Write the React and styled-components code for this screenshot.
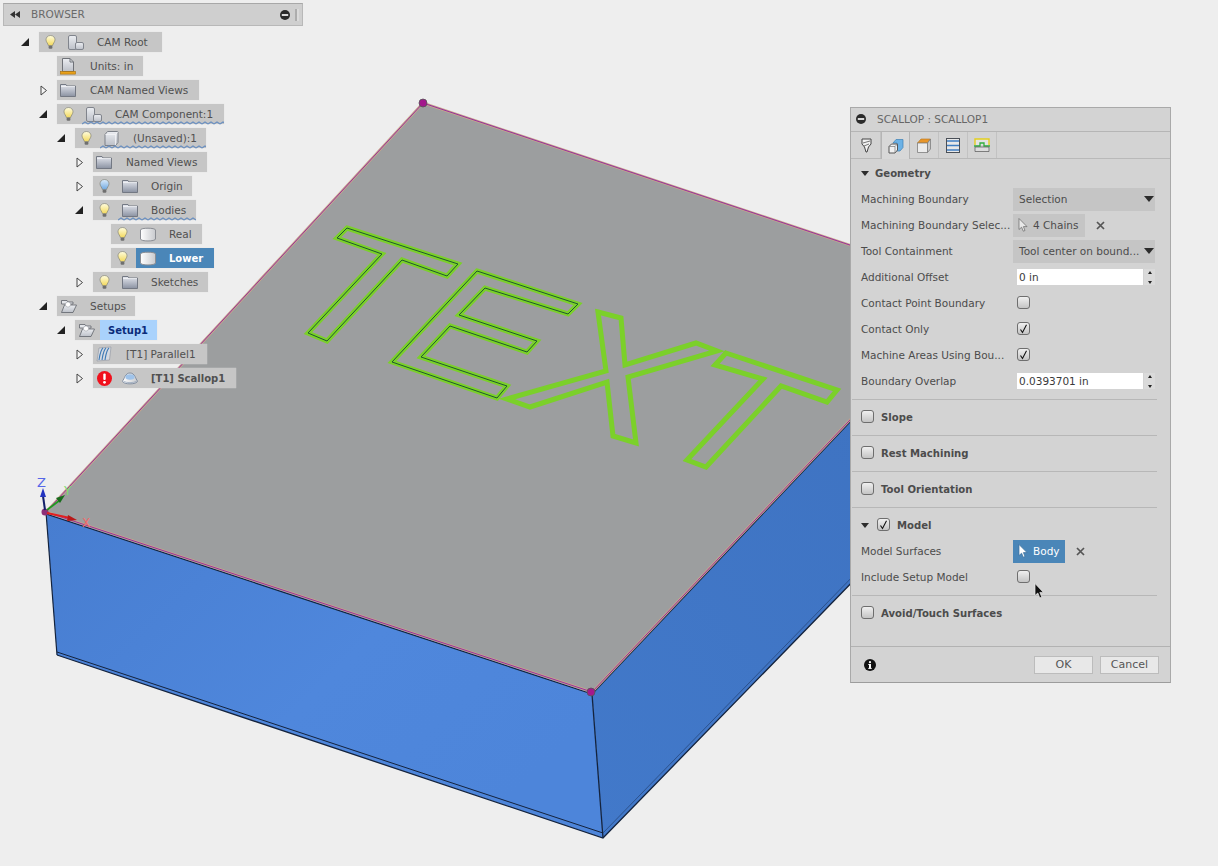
import { createGlobalStyle, styled } from "styled-components";

const GlobalStyle = createGlobalStyle`
  html, body {
    margin: 0;
    padding: 0;
    background: #eeeeee;
    font-family: "DejaVu Sans", "Liberation Sans", sans-serif;
    font-size: 11px;
    color: #4a4a4a;
  }
`;

const Page = styled.div`
  position: relative;
  width: 1218px;
  height: 866px;
  overflow: hidden;
  background: #eeeeee;
`;

const SceneSvg = styled.svg`
  position: absolute;
  inset: 0;
`;

/* browser panel */
const BrowserWindow = styled.div`
  position: absolute;
  left: 3px;
  top: 3px;
  width: 300px;
`;

const BrowserHeader = styled.div`
  display: flex;
  align-items: center;
  height: 23px;
  box-sizing: border-box;
  padding: 0 3px 0 6px;
  background: #cfcfcf;
  border: 1px solid #b8b8b8;
  border-top-color: #a8a8a8;
  color: #6a6a6a;
  font-size: 10.5px;
`;

const BrowserTitle = styled.span`
  margin: 0 0 2px 10px;
  flex: 1;
`;

const Tree = styled.div`
  display: flex;
  flex-direction: column;
  padding-top: 4px;
`;

const TreeRow = styled.div`
  display: flex;
  align-items: center;
  height: 24px;
  padding-left: ${(p) => 18 + p.$depth * 18}px;
`;

const ArrowSlot = styled.div`
  display: flex;
  align-items: center;
  width: 18px;
  flex: none;
`;

const Chip = styled.div`
  position: relative;
  display: flex;
  align-items: center;
  width: ${(p) => p.$width}px;
  height: 20px;
  background: #c6c6c6;
  box-shadow: 0 0 1px #dddddd;
  flex: none;
`;

const LeadSlot = styled.div`
  display: flex;
  align-items: center;
  justify-content: center;
  width: 23px;
  margin-right: 2px;
  flex: none;
`;

const IconSlot = styled.div`
  display: flex;
  align-items: center;
  width: 25px;
  padding-left: ${(p) => (p.$afterLead ? 4 : 3)}px;
  box-sizing: border-box;
  flex: none;
`;

const ChipLabel = styled.span`
  padding-left: 8px;
  white-space: nowrap;
  font-size: ${(p) => (p.$bold ? 10 : 10.5)}px;
  font-weight: ${(p) => (p.$bold ? 700 : 400)};
  color: ${(p) => p.$color || "#505050"};
`;

const Highlight = styled.div`
  display: flex;
  align-items: center;
  align-self: stretch;
  flex: 1;
  background: ${(p) => p.$bg};
`;

const WaveLine = styled.svg`
  position: absolute;
  left: 25px;
  right: 0;
  bottom: -1px;
  width: calc(100% - 25px);
  height: 4px;
`;

/* scallop dialog */
const Dialog = styled.div`
  position: absolute;
  left: 850px;
  top: 107px;
  width: 321px;
  height: 576px;
  box-sizing: border-box;
  display: flex;
  flex-direction: column;
  background: #d3d3d3;
  border: 1px solid #a9a9a9;
  border-bottom-color: #9c9c9c;
`;

const DialogTitle = styled.div`
  display: flex;
  align-items: center;
  gap: 11px;
  height: 24px;
  box-sizing: border-box;
  padding: 0 0 2px 5px;
  border-bottom: 1px solid #b5b5b5;
  color: #666666;
  font-size: 10.5px;
`;

const TabBar = styled.div`
  display: flex;
  height: 27px;
  box-sizing: border-box;
  padding-left: 1px;
  border-bottom: 1px solid #b9b9b9;
`;

const Tab = styled.div`
  display: flex;
  align-items: center;
  justify-content: center;
  width: 29px;
  height: ${(p) => (p.$active ? 27 : 26)}px;
  box-sizing: border-box;
  background: ${(p) => (p.$active ? "#d8d8d8" : "transparent")};
  border-right: 1px solid ${(p) => (p.$active ? "#b5b5b5" : "#c2c2c2")};
  border-left: ${(p) => (p.$active ? "1px solid #b5b5b5" : "0")};
`;

const Section = styled.div`
  margin: 0 13px 0 1px;
  padding: ${(p) => (p.$first ? 1 : 4)}px 0 5px;
  border-bottom: ${(p) => (p.$last ? "0" : "1px solid #b7b7b7")};
`;

const SectionHeader = styled.div`
  display: flex;
  align-items: center;
  height: 26px;
  padding-left: 9px;
  font-weight: 700;
  font-size: 10.1px;
  color: #4c4c4c;
`;

const HeaderText = styled.span`
  margin-left: ${(p) => p.$gap}px;
`;

const DownTriangle = styled.span`
  display: inline-block;
  width: 0;
  height: 0;
  border-left: ${(p) => p.$size}px solid transparent;
  border-right: ${(p) => p.$size}px solid transparent;
  border-top: ${(p) => p.$size + 1}px solid #2c2c2c;
  flex: none;
`;

const FormRow = styled.div`
  display: flex;
  align-items: center;
  height: 26px;
  padding-left: 9px;
`;

const FormLabel = styled.div`
  width: 153px;
  flex: none;
  white-space: nowrap;
  font-size: 10.5px;
  color: #4c4c4c;
`;

const Select = styled.div`
  display: flex;
  align-items: center;
  justify-content: space-between;
  width: 142px;
  height: 23px;
  box-sizing: border-box;
  padding: 0 1px 0 6px;
  margin-left: -1px;
  background: #c5c5c5;
  font-size: 10.5px;
  color: #4c4c4c;
  white-space: nowrap;
`;

const PickButton = styled.div`
  display: flex;
  align-items: center;
  gap: 5px;
  width: ${(p) => p.$width}px;
  height: 23px;
  box-sizing: border-box;
  padding-left: 5px;
  margin-left: -1px;
  background: ${(p) => (p.$active ? "#4a86b8" : "#c5c5c5")};
  color: ${(p) => (p.$active ? "#ffffff" : "#4c4c4c")};
  font-size: 10.5px;
`;

const ClearButton = styled.span`
  display: flex;
  margin-left: 11px;
`;

const NumberField = styled.div`
  display: flex;
  align-items: center;
  margin-left: 3px;
`;

const NumberInput = styled.div`
  width: 126px;
  height: 16px;
  box-sizing: border-box;
  padding-left: 2px;
  line-height: 16px;
  background: #ffffff;
  font-size: 10.5px;
  color: #3a3a3a;
`;

const Spinner = styled.div`
  display: flex;
  flex-direction: column;
  justify-content: space-between;
  align-items: center;
  width: 11px;
  height: 16px;
  margin-left: 1px;
  padding: 2px 0 1px;
  box-sizing: border-box;
  background: #dadada;
`;

const SpinUp = styled.span`
  width: 0;
  height: 0;
  border-left: 2px solid transparent;
  border-right: 2px solid transparent;
  border-bottom: 3px solid #222222;
`;

const SpinDown = styled.span`
  width: 0;
  height: 0;
  border-left: 2px solid transparent;
  border-right: 2px solid transparent;
  border-top: 3px solid #222222;
`;

const CheckBox = styled.span`
  display: flex;
  align-items: center;
  justify-content: center;
  width: 13px;
  height: 13px;
  margin: 0 0 1px ${(p) => p.$indent || 0}px;
  box-sizing: border-box;
  border: 1px solid #6e6e6e;
  border-radius: 3px;
  background: linear-gradient(#f0f0f0, #c4c4c4);
  flex: none;
`;

const Spacer = styled.div`
  flex: 1;
`;

const DialogFooter = styled.div`
  display: flex;
  align-items: center;
  justify-content: space-between;
  height: 36px;
  box-sizing: border-box;
  padding: 0 11px 0 13px;
  border-top: 1px solid #b2b2b2;
`;

const FooterButtons = styled.div`
  display: flex;
  gap: 7px;
`;

const FooterButton = styled.div`
  width: 59px;
  height: 18px;
  box-sizing: border-box;
  line-height: 16px;
  text-align: center;
  background: #e8e8e8;
  border: 1px solid #bcbcbc;
  font-size: 11px;
  color: #555555;
`;

const Pointer = styled.svg`
  position: absolute;
  left: 1034px;
  top: 583px;
`;

/* small drawings */
const ExpandedArrow = () => (
  <svg width="8" height="8" viewBox="0 0 8 8">
    <path d="M0 8 L8 0 V8 Z" fill="#222" />
  </svg>
);

const CollapsedArrow = () => (
  <svg width="8" height="11" viewBox="0 0 8 11" style={{ marginLeft: 1 }}>
    <path d="M1 1 L6.5 5.5 L1 10 Z" fill="#f4f4f4" stroke="#444" strokeWidth="1" />
  </svg>
);

const Bulb = ({ blue }) => (
  <svg width="11" height="15" viewBox="0 0 11 15">
    <path
      d="M5.5 .5 C2.6 .5 1 2.6 1 4.8 C1 7 3 8.4 3.4 10.6 H7.6 C8 8.4 10 7 10 4.8 C10 2.6 8.4 .5 5.5 .5 Z"
      fill={blue ? "url(#bulbBlue)" : "url(#bulbYellow)"}
      stroke="#77776a"
      strokeWidth=".6"
    />
    <rect x="3.6" y="10.8" width="3.8" height="3" rx="1" fill="#6f6f6f" />
  </svg>
);

const ComponentIcon = () => (
  <svg width="16" height="15" viewBox="0 0 16 15">
    <rect x=".5" y=".5" width="8" height="14" rx="1.5" fill="url(#metal)" stroke="#80848c" />
    <rect x="7.5" y="7.5" width="8" height="7" rx="1.5" fill="url(#metal)" stroke="#80848c" />
  </svg>
);

const DocIcon = () => (
  <svg width="16" height="17" viewBox="0 0 16 17">
    <path d="M2.5 .5 H10 L13.5 4 V13.5 H2.5 Z" fill="url(#metal)" stroke="#6f7278" />
    <path d="M10 .5 V4 H13.5" fill="none" stroke="#6f7278" />
    <rect x=".5" y="13.5" width="15" height="2.6" fill="#e9a11a" stroke="#a76d08" strokeWidth=".6" />
  </svg>
);

const FolderIcon = () => (
  <svg width="16" height="14" viewBox="0 0 16 14">
    <path d="M.5 1.5 H6 L7 3 H15.5 V13.5 H.5 Z" fill="url(#folder)" stroke="#737883" />
    <path d="M1 3.5 H15" stroke="#f4f5f8" strokeWidth=".8" />
  </svg>
);

const OpenFolderIcon = () => (
  <svg width="17" height="13" viewBox="0 0 17 13">
    <path d="M1.5 .5 H7 L8 2 H13 V4 H1.5 Z" fill="#e4e6ea" stroke="#5f636b" strokeWidth=".8" />
    <path d="M1.5 12.5 L4.5 5 H16.5 L13 12.5 Z" fill="url(#metal)" stroke="#5f636b" strokeWidth=".8" />
    <circle cx="8" cy="4.5" r="2.6" fill="#fff" stroke="#8a8e96" strokeWidth=".5" />
  </svg>
);

const BoxIcon = () => (
  <svg width="15" height="15" viewBox="0 0 15 15">
    <path d="M1 3.5 L3.5 .5 H14 V11.5 L11.5 14.5 H1 Z" fill="url(#metal)" stroke="#7c8088" />
    <path d="M1.5 3.5 H11.5 V14 M11.5 3.5 L14 .5" fill="none" stroke="#f4f4f6" strokeWidth=".8" />
  </svg>
);

const CylinderIcon = () => (
  <svg width="16" height="15" viewBox="0 0 16 15">
    <path
      d="M.5 3 C.5 .6 15.5 .6 15.5 3 V12 C15.5 14.6 .5 14.6 .5 12 Z"
      fill="url(#cylinder)"
      stroke="#8a8d93"
    />
  </svg>
);

const ParallelIcon = () => (
  <svg width="16" height="16" viewBox="0 0 16 16">
    <path d="M1 15 L3 2 L15 1 L13.5 14 Z" fill="#d5dae2" stroke="#8e949e" strokeWidth=".6" />
    <path
      d="M3 14 C4 8 4.5 4 7 2 M6 14 C7 8 7.5 4 10 2 M9 14 C10 8 10.5 4 13 2"
      fill="none"
      stroke="#3f7bb6"
      strokeWidth="1.1"
    />
  </svg>
);

const ScallopIcon = () => (
  <svg width="16" height="13" viewBox="0 0 16 13">
    <path
      d="M.5 9 C2.5 7 3 1 8 1 C13 1 13.5 7 15.5 9 C15.5 12.8 .5 12.8 .5 9 Z"
      fill="url(#cylinder)"
      stroke="#6f7d94"
      strokeWidth=".8"
    />
    <ellipse cx="8" cy="5" rx="4.6" ry="2.8" fill="#9fc3ea" />
    <path d="M2 9.5 C5 11 11 11 14 9.5" fill="none" stroke="#8fa0b8" strokeWidth=".7" />
  </svg>
);

const ErrorBadge = () => (
  <svg width="15" height="15" viewBox="0 0 15 15">
    <circle cx="7.5" cy="7.5" r="7.5" fill="#f0101c" />
    <rect x="6.3" y="2.5" width="2.4" height="6.6" rx="1" fill="#fff" />
    <circle cx="7.5" cy="11.3" r="1.4" fill="#fff" />
  </svg>
);

const MinusCircle = ({ size }) => (
  <svg width={size} height={size} viewBox="0 0 10 10">
    <circle cx="5" cy="5" r="5" fill="#2a2a2a" />
    <rect x="1.8" y="4" width="6.4" height="2" fill="#d8d8d8" />
  </svg>
);

const RewindIcon = () => (
  <svg width="11" height="7" viewBox="0 0 11 7">
    <path d="M0 3.5 L5 0 V7 Z M5 3.5 L10 0 V7 Z" fill="#333" />
  </svg>
);

const GripIcon = () => (
  <svg width="4" height="12" viewBox="0 0 4 12" style={{ marginLeft: 5 }}>
    <path d="M1 0 V12" stroke="#8a8a8a" />
    <path d="M3 0 V12" stroke="#e6e6e6" />
  </svg>
);

const ToolTabIcon = () => (
  <svg width="11" height="15" viewBox="0 0 11 15">
    <path d="M1 1 H10 V6 L7.5 9 L6 14 H5 L3.5 9 L1 6 Z" fill="#f2f2f2" stroke="#454545" />
    <path d="M2 5 L9 3 M3 8 L8 6" stroke="#555" strokeWidth=".8" />
  </svg>
);

const GeometryTabIcon = () => (
  <svg width="16" height="16" viewBox="0 0 16 16">
    <path d="M5 5 L8 1.5 H15 V9.5 L12 13 H9 V5 Z" fill="#6cb2e6" stroke="#3d7fb5" strokeWidth=".7" />
    <path d="M1 8.5 L3.5 6 H9.5 V12 L7 15 H1 Z" fill="#f0f0f0" stroke="#555" />
    <path d="M1 8.5 H7 V15 M7 8.5 L9.5 6" fill="none" stroke="#777" strokeWidth=".7" />
  </svg>
);

const StockTabIcon = () => (
  <svg width="14" height="15" viewBox="0 0 14 15">
    <path d="M.5 5 L4 1 H13.5 L10.5 5 Z" fill="#e8962a" stroke="#b87416" strokeWidth=".6" />
    <path d="M.5 5 H10.5 V14.5 H.5 Z" fill="#ececec" stroke="#7d7d7d" strokeWidth=".8" />
    <path d="M10.5 5 L13.5 1 V11 L10.5 14.5 Z" fill="#c9c9c9" stroke="#7d7d7d" strokeWidth=".8" />
  </svg>
);

const HeightsTabIcon = () => (
  <svg width="14" height="15" viewBox="0 0 14 15">
    <rect x=".5" y=".5" width="13" height="14" fill="#e8e8e8" stroke="#4a4f57" />
    <path d="M1 3 H13 M1 7.5 H13 M1 12 H13" stroke="#3f7ec2" strokeWidth="1.4" />
  </svg>
);

const PassesTabIcon = () => (
  <svg width="16" height="14" viewBox="0 0 16 14">
    <path d="M1 7 V1 H15 V7" fill="#e4e4e4" stroke="#e4cf1e" strokeWidth="1.4" />
    <path d="M0 8 H6 V5 H10 V8 H16" fill="none" stroke="#2fae3c" strokeWidth="1.3" />
    <path d="M1 9 H15 V13.5 H1 Z" fill="#dcdcdc" stroke="#555" strokeWidth=".7" />
  </svg>
);

const CheckMark = () => (
  <svg width="9" height="10" viewBox="0 0 9 10">
    <path d="M1.5 5.5 L3.5 8.5 L7.5 .8" fill="none" stroke="#111" strokeWidth="1.1" />
  </svg>
);

const CloseMark = () => (
  <svg width="9" height="9" viewBox="0 0 9 9">
    <path d="M1 1 L8 8 M8 1 L1 8" stroke="#555" strokeWidth="1.7" />
  </svg>
);

const ArrowCursor = ({ fill, stroke }) => (
  <svg width="10" height="14" viewBox="0 0 10 14" style={{ flex: "none" }}>
    <path d="M1 .5 V11.5 L3.6 9.2 L5.3 13.2 L7 12.5 L5.4 8.6 H9 Z" fill={fill} stroke={stroke} strokeWidth=".7" />
  </svg>
);

const InfoIcon = () => (
  <svg width="12" height="12" viewBox="0 0 12 12">
    <circle cx="6" cy="6" r="6" fill="#111" />
    <rect x="5" y="5" width="2" height="4.6" fill="#fff" />
    <rect x="4.2" y="5" width="1.6" height=".9" fill="#fff" />
    <rect x="4.2" y="8.9" width="3.6" height=".9" fill="#fff" />
    <circle cx="6" cy="3.2" r="1.1" fill="#fff" />
  </svg>
);

const Wave = ({ id }) => (
  <WaveLine>
    <defs>
      <pattern id={id} width="6" height="4" patternUnits="userSpaceOnUse">
        <path d="M0 3 L3 1 L6 3" fill="none" stroke="#6a8fc0" strokeWidth="1.2" />
      </pattern>
    </defs>
    <rect width="100%" height="4" fill={`url(#${id})`} />
  </WaveLine>
);

const treeItems = [
  { depth: 0, open: true, width: 123, bulb: "on", icon: ComponentIcon, label: "CAM Root" },
  { depth: 1, width: 86, icon: DocIcon, label: "Units: in" },
  { depth: 1, closed: true, width: 142, icon: FolderIcon, label: "CAM Named Views" },
  { depth: 1, open: true, width: 167, bulb: "on", icon: ComponentIcon, label: "CAM Component:1", wave: true },
  { depth: 2, open: true, width: 131, bulb: "on", icon: BoxIcon, label: "(Unsaved):1", wave: true },
  { depth: 3, closed: true, width: 114, icon: FolderIcon, label: "Named Views" },
  { depth: 3, closed: true, width: 99, bulb: "blue", icon: FolderIcon, label: "Origin" },
  { depth: 3, open: true, width: 103, bulb: "on", icon: FolderIcon, label: "Bodies", wave: true },
  { depth: 4, width: 91, bulb: "on", icon: CylinderIcon, label: "Real" },
  { depth: 4, width: 103, bulb: "on", icon: CylinderIcon, label: "Lower", selected: true },
  { depth: 3, closed: true, width: 115, bulb: "on", icon: FolderIcon, label: "Sketches" },
  { depth: 1, open: true, width: 78, icon: OpenFolderIcon, label: "Setups" },
  { depth: 2, open: true, width: 82, icon: OpenFolderIcon, label: "Setup1", active: true },
  { depth: 3, closed: true, width: 114, icon: ParallelIcon, label: "[T1] Parallel1" },
  { depth: 3, closed: true, width: 143, bulb: "error", icon: ScallopIcon, label: "[T1] Scallop1", bold: true },
];

function TreeItem({ item, index }) {
  const Icon = item.icon;
  const lead = item.bulb && (
    <LeadSlot>{item.bulb === "error" ? <ErrorBadge /> : <Bulb blue={item.bulb === "blue"} />}</LeadSlot>
  );
  const icon = (
    <IconSlot $afterLead={!!item.bulb}>
      <Icon />
    </IconSlot>
  );

  return (
    <TreeRow $depth={item.depth}>
      <ArrowSlot>
        {item.open && <ExpandedArrow />}
        {item.closed && <CollapsedArrow />}
      </ArrowSlot>
      <Chip $width={item.width}>
        {lead}
        {item.selected && (
          <Highlight $bg="#4a86b8">
            {icon}
            <ChipLabel $bold $color="#ffffff">{item.label}</ChipLabel>
          </Highlight>
        )}
        {item.active && (
          <>
            {icon}
            <Highlight $bg="#a9d2fc">
              <ChipLabel $bold $color="#0b2c7a">{item.label}</ChipLabel>
            </Highlight>
          </>
        )}
        {!item.selected && !item.active && (
          <>
            {icon}
            <ChipLabel $bold={item.bold}>{item.label}</ChipLabel>
          </>
        )}
        {item.wave && <Wave id={`wave${index}`} />}
      </Chip>
    </TreeRow>
  );
}

const points = (list) => list.map((p) => p.join(",")).join(" ");

const letterT = [[347,228],[458,264],[447,276],[402,260],[327,341],[308,333],[382,254],[337,238]];
const letterE = [[477,271],[578,304],[568,314],[485,288],[459,315],[537,341],[527,352],[450,326],[421,357],[507,386],[497,398],[392,362]];
const letterX = [[598,312],[621,318],[625,365],[696,343],[717,351],[628,377],[636,443],[613,436],[607,382],[530,407],[507,399],[606,371]];
const letterT2 = [[726,353],[837,390],[827,402],[781,386],[706,467],[687,460],[763,379],[715,365]];

function Scene() {
  return (
    <SceneSvg width="1218" height="866" viewBox="0 0 1218 866">
      <defs>
        <linearGradient id="bulbYellow" x1="0" y1="0" x2="0" y2="1">
          <stop offset="0" stopColor="#fffde0" />
          <stop offset="1" stopColor="#f3d95c" />
        </linearGradient>
        <linearGradient id="bulbBlue" x1="0" y1="0" x2="0" y2="1">
          <stop offset="0" stopColor="#dcecfb" />
          <stop offset="1" stopColor="#6fa8e0" />
        </linearGradient>
        <linearGradient id="metal" x1="0" y1="0" x2="0" y2="1">
          <stop offset="0" stopColor="#eceef2" />
          <stop offset="1" stopColor="#bcc0c8" />
        </linearGradient>
        <linearGradient id="folder" x1="0" y1="0" x2="0" y2="1">
          <stop offset="0" stopColor="#e4e7ee" />
          <stop offset="1" stopColor="#8b92a2" />
        </linearGradient>
        <linearGradient id="cylinder" x1="0" y1="0" x2="1" y2="0">
          <stop offset="0" stopColor="#ffffff" />
          <stop offset="1" stopColor="#c8cace" />
        </linearGradient>
        <linearGradient id="leftFace" x1="0" y1="0" x2="1" y2="0.6">
          <stop offset="0" stopColor="#477dd0" />
          <stop offset="0.6" stopColor="#4f87dc" />
          <stop offset="1" stopColor="#4d85da" />
        </linearGradient>
        <linearGradient id="rightFace" x1="0" y1="1" x2="1" y2="0">
          <stop offset="0" stopColor="#4279ca" />
          <stop offset="1" stopColor="#3d71bf" />
        </linearGradient>
      </defs>

      <polygon points="46,512 592,692 603,838 57,655" fill="url(#leftFace)" />
      <polygon points="592,692 976,287 1010,420 603,838" fill="url(#rightFace)" />
      <polygon points="423,103 976,287 592,692 46,512" fill="#9c9e9f" />

      <polyline points="46,514 592,694" fill="none" stroke="#14233d" strokeWidth="1.2" />
      <polyline points="592,694 976,289" fill="none" stroke="#14233d" strokeWidth="1.2" />
      <polyline points="46,512 57,655" fill="none" stroke="#14233d" strokeWidth="1.2" />
      <polyline points="592,694 603,838" fill="none" stroke="#14233d" strokeWidth="1.3" />
      <polyline points="57,655 603,838 1010,420" fill="none" stroke="#14233d" strokeWidth="1.3" />
      <polyline points="57,652 603,833" fill="none" stroke="#14233d" strokeWidth="1" />
      <polyline points="603,833 1005,420" fill="none" stroke="#27497f" strokeWidth=".8" />

      <polygon points="423,103 976,287 592,692 46,512" fill="none" stroke="#c8a58a" strokeWidth="2.4" />
      <polygon points="423,103 976,287 592,692 46,512" fill="none" stroke="#96309f" strokeWidth="1" />

      <polygon points={points(letterT)} fill="none" stroke="#7bd02a" strokeWidth="5" />
      <polygon points={points(letterE)} fill="none" stroke="#7bd02a" strokeWidth="5" />
      <polygon points={points(letterT)} fill="none" stroke="#1d5a2c" strokeWidth="1" />
      <polygon points={points(letterE)} fill="none" stroke="#1d5a2c" strokeWidth="1" />
      <polygon points={points(letterX)} fill="none" stroke="#7bd02a" strokeWidth="5" />
      <polygon points={points(letterT2)} fill="none" stroke="#7bd02a" strokeWidth="5" />

      <circle cx="423" cy="103" r="4" fill="#a3188c" stroke="#555" strokeWidth=".8" />
      <circle cx="591" cy="692" r="4" fill="#a3188c" stroke="#555" strokeWidth=".8" />

      <circle cx="45" cy="512" r="3.5" fill="#8d2f78" />
      <path d="M45 510 L43 496" stroke="#14206a" strokeWidth="2" />
      <path d="M43 488 L40 497 H46 Z" fill="#2233c0" />
      <path d="M47 510 L60 500" stroke="#1f9a20" strokeWidth="1.8" />
      <path d="M65 495 L56 498 L60 503 Z" fill="#176e1c" />
      <path d="M47 513 L70 518" stroke="#e02020" strokeWidth="1.8" />
      <path d="M77 520 L68 515 L67 521 Z" fill="#b81818" />
      <text x="37" y="487" fontSize="13" fontFamily="DejaVu Sans" fill="#5566e8">Z</text>
      <text x="64" y="495" fontSize="12" fontFamily="DejaVu Sans" fill="#7ddc70">Y</text>
      <text x="82" y="527" fontSize="12" fontFamily="DejaVu Sans" fill="#f06a6a">X</text>
    </SceneSvg>
  );
}

function Browser() {
  return (
    <BrowserWindow>
      <BrowserHeader>
        <RewindIcon />
        <BrowserTitle>BROWSER</BrowserTitle>
        <MinusCircle size={10} />
        <GripIcon />
      </BrowserHeader>
      <Tree>
        {treeItems.map((item, index) => (
          <TreeItem key={item.label} item={item} index={index} />
        ))}
      </Tree>
    </BrowserWindow>
  );
}

const Check = ({ checked, indent }) => (
  <CheckBox $indent={indent}>{checked && <CheckMark />}</CheckBox>
);

const Spin = () => (
  <Spinner>
    <SpinUp />
    <SpinDown />
  </Spinner>
);

function ScallopDialog() {
  return (
    <Dialog>
      <DialogTitle>
        <MinusCircle size={10} />
        SCALLOP : SCALLOP1
      </DialogTitle>
      <TabBar>
        <Tab><ToolTabIcon /></Tab>
        <Tab $active><GeometryTabIcon /></Tab>
        <Tab><StockTabIcon /></Tab>
        <Tab><HeightsTabIcon /></Tab>
        <Tab><PassesTabIcon /></Tab>
      </TabBar>

      <Section $first>
        <SectionHeader>
          <DownTriangle $size={4} />
          <HeaderText $gap={6}>Geometry</HeaderText>
        </SectionHeader>
        <FormRow>
          <FormLabel>Machining Boundary</FormLabel>
          <Select>Selection<DownTriangle $size={5} /></Select>
        </FormRow>
        <FormRow>
          <FormLabel>Machining Boundary Selec...</FormLabel>
          <PickButton $width={72}>
            <ArrowCursor fill="#e8e8e8" stroke="#666" />
            4 Chains
          </PickButton>
          <ClearButton><CloseMark /></ClearButton>
        </FormRow>
        <FormRow>
          <FormLabel>Tool Containment</FormLabel>
          <Select>Tool center on bound...<DownTriangle $size={5} /></Select>
        </FormRow>
        <FormRow>
          <FormLabel>Additional Offset</FormLabel>
          <NumberField><NumberInput>0 in</NumberInput><Spin /></NumberField>
        </FormRow>
        <FormRow>
          <FormLabel>Contact Point Boundary</FormLabel>
          <Check indent={3} />
        </FormRow>
        <FormRow>
          <FormLabel>Contact Only</FormLabel>
          <Check indent={3} checked />
        </FormRow>
        <FormRow>
          <FormLabel>Machine Areas Using Bou...</FormLabel>
          <Check indent={3} checked />
        </FormRow>
        <FormRow>
          <FormLabel>Boundary Overlap</FormLabel>
          <NumberField><NumberInput>0.0393701 in</NumberInput><Spin /></NumberField>
        </FormRow>
      </Section>

      <Section>
        <SectionHeader><Check /><HeaderText $gap={7}>Slope</HeaderText></SectionHeader>
      </Section>
      <Section>
        <SectionHeader><Check /><HeaderText $gap={7}>Rest Machining</HeaderText></SectionHeader>
      </Section>
      <Section>
        <SectionHeader><Check /><HeaderText $gap={7}>Tool Orientation</HeaderText></SectionHeader>
      </Section>

      <Section>
        <SectionHeader>
          <DownTriangle $size={4} />
          <Check indent={8} checked />
          <HeaderText $gap={7}>Model</HeaderText>
        </SectionHeader>
        <FormRow>
          <FormLabel>Model Surfaces</FormLabel>
          <PickButton $width={52} $active>
            <ArrowCursor fill="#ffffff" stroke="#3b6f9b" />
            Body
          </PickButton>
          <ClearButton><CloseMark /></ClearButton>
        </FormRow>
        <FormRow>
          <FormLabel>Include Setup Model</FormLabel>
          <Check indent={3} />
        </FormRow>
      </Section>

      <Section $last>
        <SectionHeader><Check /><HeaderText $gap={7}>Avoid/Touch Surfaces</HeaderText></SectionHeader>
      </Section>

      <Spacer />
      <DialogFooter>
        <InfoIcon />
        <FooterButtons>
          <FooterButton>OK</FooterButton>
          <FooterButton>Cancel</FooterButton>
        </FooterButtons>
      </DialogFooter>
    </Dialog>
  );
}

export default function App() {
  return (
    <Page>
      <GlobalStyle />
      <Scene />
      <Browser />
      <ScallopDialog />
      <Pointer width="10" height="16" viewBox="0 0 10 16">
        <path d="M1 .5 V12.5 L3.8 10 L5.8 15 L7.8 14 L5.8 9.4 H9.4 Z" fill="#111" stroke="#eee" strokeWidth=".7" />
      </Pointer>
    </Page>
  );
}
